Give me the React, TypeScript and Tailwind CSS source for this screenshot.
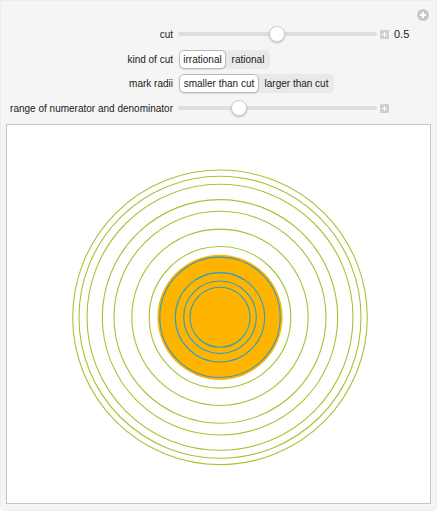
import React from "react"

const green = [147.3, 141, 133, 117.7, 106, 88.2, 70.8]
const blue = [60.2, 44.7, 36.3, 30]

function Slider({ pos }: { pos: number }) {
  return (
    <div className="relative h-4 w-[199px] flex items-center">
      <div className="h-[4px] w-full rounded-full bg-[#dedede]" />
      <div
        className="absolute top-1/2 h-[16px] w-[16px] -translate-x-1/2 -translate-y-1/2 rounded-full bg-white border border-[#d4d4d4] shadow-[0_1px_2px_rgba(0,0,0,0.25)]"
        style={{ left: pos }}
      />
    </div>
  )
}

function Plus() {
  return (
    <div className="relative h-[9px] w-[9px] rounded-[1px] bg-[#cfcfcf]">
      <div className="absolute left-[2px] top-[4px] h-[1px] w-[5px] bg-white" />
      <div className="absolute left-[4px] top-[2px] h-[5px] w-[1px] bg-white" />
    </div>
  )
}

function Segmented({ items, widths }: { items: string[]; widths: number[] }) {
  return (
    <div className="flex h-[19px] items-stretch rounded-[5px] bg-[#e9e9e9]">
      {items.map((t, i) => (
        <div
          key={t}
          style={{ width: widths[i] }}
          className={
            i === 0
              ? "flex items-center justify-center whitespace-nowrap rounded-[5px] border border-[#b9b9b9] bg-white shadow-[0_1px_1px_rgba(0,0,0,0.1)]"
              : "flex items-center justify-center whitespace-nowrap"
          }
        >
          {t}
        </div>
      ))}
    </div>
  )
}

export default function App() {
  return (
    <div className="h-[512px] w-[438px] bg-white" style={{ fontFamily: '"Liberation Sans", Arial, sans-serif' }}>
      <div className="relative h-[511px] w-[437px] rounded-b-[6px] border border-[#ececec] bg-[#f5f5f5] text-[10px] text-[#222]">
        <div className="absolute right-[7px] top-[8px] flex h-[12px] w-[12px] items-center justify-center rounded-full bg-[#c8c8c8]">
          <div className="absolute h-[1.5px] w-[6px] bg-white" />
          <div className="absolute h-[6px] w-[1.5px] bg-white" />
        </div>

        <div className="flex flex-col pt-[24px]">
          <div className="flex h-[18px] items-center">
            <div className="w-[172px] whitespace-nowrap text-right">cut</div>
            <div className="ml-[5px]"><Slider pos={99} /></div>
            <div className="ml-[3px]"><Plus /></div>
            <div className="ml-[5px] text-[11px]">0.5</div>
          </div>
          <div className="mt-[7px] flex h-[19px] items-center">
            <div className="w-[172px] whitespace-nowrap text-right">kind of cut</div>
            <div className="ml-[6px]"><Segmented items={["irrational", "rational"]} widths={[47, 44]} /></div>
          </div>
          <div className="mt-[5px] flex h-[19px] items-center">
            <div className="w-[172px] whitespace-nowrap text-right">mark radii</div>
            <div className="ml-[6px]"><Segmented items={["smaller than cut", "larger than cut"]} widths={[80, 75]} /></div>
          </div>
          <div className="mt-[6px] flex h-[18px] items-center">
            <div className="w-[172px] whitespace-nowrap text-right">range of numerator and denominator</div>
            <div className="ml-[5px]"><Slider pos={61} /></div>
            <div className="ml-[3px]"><Plus /></div>
          </div>
        </div>

        <div className="mx-[5px] mt-[7px] h-[380px] border border-[#c6c6c6] bg-white">
          <svg width="423" height="378" viewBox="0 0 423 378">
            <circle cx={213} cy={192.3} r={62.6} fill="#ffb400" />
            {green.map((r) => (
              <circle key={r} cx={213} cy={192.3} r={r} fill="none" stroke="#a9c234" strokeWidth={1.1} />
            ))}
            {blue.map((r) => (
              <circle key={r} cx={213} cy={192.3} r={r} fill="none" stroke="#2a9fc7" strokeWidth={1.1} />
            ))}
          </svg>
        </div>
      </div>
    </div>
  )
}
